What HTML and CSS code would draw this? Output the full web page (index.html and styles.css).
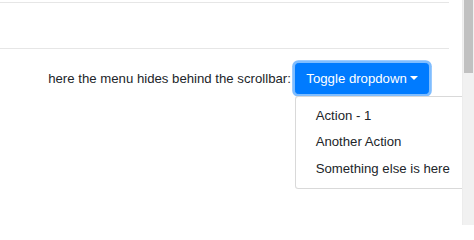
FILE: index.html
```html
<!DOCTYPE html>
<html>
<head>
<meta charset="utf-8">
<link rel="stylesheet" href="styles.css">
</head>
<body>
<div class="page">
  <div class="rule rule-top"></div>
  <div class="rule rule-second"></div>
  <div class="row">
    <span class="label">here the menu hides behind the scrollbar:</span>
    <div class="dropdown">
      <button class="btn" type="button">Toggle dropdown<span class="caret"></span></button>
      <div class="menu">
        <div class="item">Action - 1</div>
        <div class="item">Another Action</div>
        <div class="item">Something else is here</div>
      </div>
    </div>
  </div>
</div>
<div class="scrollbar"><div class="thumb"></div></div>
</body>
</html>
```
FILE: styles.css
```css
html, body {
  margin: 0;
  padding: 0;
  overflow: hidden;
  background: #ffffff;
}
body {
  width: 474px;
  height: 225px;
  font-family: "Liberation Sans", Arial, sans-serif;
  font-size: 13.2px;
  line-height: 1.5;
  color: #212529;
}
.page {
  width: 449px;
}
.rule {
  height: 0;
  border-top: 1px solid #e6e6e6;
}
.rule-top {
  margin-top: 2px;
}
.rule-second {
  margin-top: 45px;
}
.row {
  display: flex;
  justify-content: flex-end;
  align-items: center;
  gap: 4px;
  margin-top: 14px;
  padding-right: 20px;
}
.label {
  white-space: nowrap;
  font-size: 13.2px;
}
.dropdown {
  position: relative;
}
.btn {
  display: block;
  font-family: inherit;
  font-size: 13.2px;
  line-height: 1.5;
  color: #ffffff;
  background: #007bff;
  border: 1px solid #007bff;
  border-radius: 3.3px;
  padding: 4.6px 9.7px 4.6px 10.5px;
  box-shadow: 0 0 0 2.8px rgba(0, 123, 255, 0.5);
  white-space: nowrap;
  cursor: pointer;
}
.caret {
  display: inline-block;
  margin-left: 3.5px;
  vertical-align: 3px;
  width: 0;
  height: 0;
  border-top: 4px solid #ffffff;
  border-left: 4px solid transparent;
  border-right: 4px solid transparent;
}
.menu {
  position: absolute;
  top: 100%;
  left: 0;
  margin-top: 1.65px;
  padding: 6px 0;
  background: #ffffff;
  border: 1px solid rgba(0, 0, 0, 0.15);
  border-radius: 3.3px;
  white-space: nowrap;
  min-width: 132px;
}
.item {
  padding: 3.3px 19.8px;
  color: #212529;
}
.scrollbar {
  position: fixed;
  top: 0;
  right: 0;
  width: 12px;
  height: 225px;
  background: #f1f1f1;
  border-left: 1px solid #ececec;
  box-sizing: border-box;
  z-index: 10;
}
.thumb {
  margin-left: 1px;
  width: 9px;
  height: 73px;
  background: #c1c1c1;
}
```
